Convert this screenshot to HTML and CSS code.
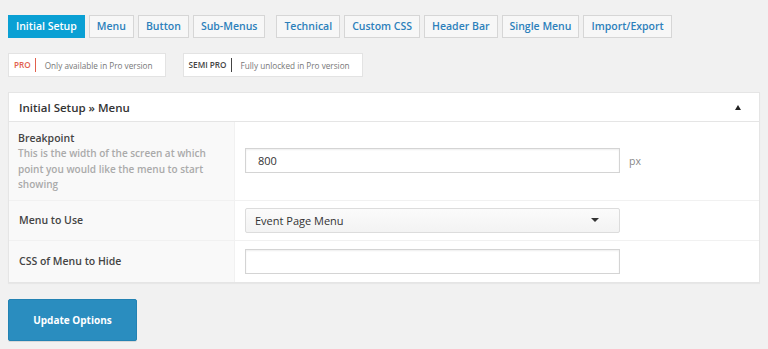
FILE: index.html
```html
<!DOCTYPE html>
<html lang="en">
<head>
  <meta charset="UTF-8">
  <title>Responsive Menu - Initial Setup</title>
  <link rel="stylesheet" href="styles.css">
</head>
<body>
  <div class="wrap">

    <div class="tabs">
      <a href="#" class="tab tab-active">Initial Setup</a>
      <a href="#" class="tab">Menu</a>
      <a href="#" class="tab">Button</a>
      <a href="#" class="tab">Sub-Menus</a>
      <a href="#" class="tab tab-spaced">Technical</a>
      <a href="#" class="tab">Custom CSS</a>
      <a href="#" class="tab">Header Bar</a>
      <a href="#" class="tab">Single Menu</a>
      <a href="#" class="tab">Import/Export</a>
    </div>

    <div class="legend">
      <div class="legend-item">
        <span class="legend-tag tag-pro">PRO</span>
        <span class="legend-text">Only available in Pro version</span>
      </div>
      <div class="legend-item">
        <span class="legend-tag tag-semi">SEMI PRO</span>
        <span class="legend-text">Fully unlocked in Pro version</span>
      </div>
    </div>

    <div class="panel">
      <div class="panel-head">
        <h3>Initial Setup &raquo; Menu</h3>
        <span class="toggle"></span>
      </div>

      <div class="row row-tall">
        <div class="label-cell">
          <div class="label">Breakpoint</div>
          <div class="desc">This is the width of the screen at which point you would like the menu to start showing</div>
        </div>
        <div class="value-cell">
          <input type="text" class="field" value="800">
          <span class="unit">px</span>
        </div>
      </div>

      <div class="row">
        <div class="label-cell">
          <div class="label">Menu to Use</div>
        </div>
        <div class="value-cell">
          <div class="select">
            <span>Event Page Menu</span>
            <span class="caret"></span>
          </div>
        </div>
      </div>

      <div class="row row-last">
        <div class="label-cell">
          <div class="label">CSS of Menu to Hide</div>
        </div>
        <div class="value-cell">
          <input type="text" class="field" value="">
        </div>
      </div>
    </div>

    <button class="update">Update Options</button>
  </div>
</body>
</html>
```

FILE: styles.css
```css
/* Reset */
body, h3, input, button {
    margin: 0;
    padding: 0;
    box-sizing: border-box;
}

body {
    font-family: 'Open Sans', 'Liberation Sans', sans-serif;
    background: #f1f1f1;
    color: #444;
}

.wrap {
    padding: 15px 8px;
}

/* Tabs */
.tabs {
    display: flex;
    gap: 4px;
}

.tab {
    display: block;
    height: 23px;
    padding: 0 7px;
    line-height: 21px;
    font-size: 10.5px;
    font-weight: 600;
    color: #2c80bb;
    text-decoration: none;
    background: #f7f7f7;
    border: 1px solid #d6d6d6;
    box-sizing: border-box;
}

.tab-active {
    background: #0aa0d4;
    border-color: #0aa0d4;
    color: #fff;
}

.tab-spaced {
    margin-left: 7px;
}

/* Pro legend */
.legend {
    display: flex;
    gap: 17px;
    margin-top: 15px;
}

.legend-item {
    display: flex;
    align-items: center;
    height: 24px;
    padding: 0 12px 0 5px;
    background: #fff;
    border: 1px solid #e3e3e3;
    box-sizing: border-box;
    font-size: 8.2px;
}

.legend-tag {
    font-weight: 600;
    padding-right: 4px;
    margin-right: 9px;
    line-height: 14px;
}

.tag-pro {
    color: #e2604d;
    border-right: 1px solid #e2604d;
}

.tag-semi {
    color: #444;
    border-right: 1px solid #444;
}

.legend-text {
    color: #777;
}

/* Panel */
.panel {
    margin-top: 15px;
    background: #fff;
    border: 1px solid #e5e5e5;
    box-shadow: 0 1px 1px rgba(0, 0, 0, 0.04);
}

.panel-head {
    display: flex;
    align-items: center;
    justify-content: space-between;
    height: 28px;
    padding: 0 18px 0 10px;
    border-bottom: 1px solid #e5e5e5;
}

.panel-head h3 {
    font-size: 11.5px;
    font-weight: 600;
    color: #333;
}

.toggle {
    width: 0;
    height: 0;
    border-left: 3.5px solid transparent;
    border-right: 3.5px solid transparent;
    border-bottom: 5px solid #222;
}

.row {
    display: flex;
    min-height: 39px;
    border-top: 1px solid #f1f1f1;
}

.panel-head + .row {
    border-top: none;
}

.row-last {
    min-height: 41px;
}

.label-cell {
    width: 226px;
    flex-shrink: 0;
    display: flex;
    flex-direction: column;
    justify-content: center;
    padding: 8px 10px;
    background: #f9f9f9;
    border-right: 1px solid #f1f1f1;
    box-sizing: border-box;
}

.row-tall .label-cell {
    padding: 8px 10px 7px 9px;
}

.label {
    font-size: 10.5px;
    font-weight: 600;
    color: #444;
    line-height: 16px;
}

.desc {
    font-size: 10px;
    font-weight: 600;
    color: #aaa;
    line-height: 15.5px;
}

.value-cell {
    display: flex;
    align-items: center;
    padding: 0 10px;
}

.field {
    width: 375px;
    height: 25px;
    padding: 0 12px;
    border: 1px solid #d4d4d4;
    box-shadow: inset 0 1px 2px rgba(0, 0, 0, 0.07);
    font-family: 'Open Sans', 'Liberation Sans', sans-serif;
    font-size: 11px;
    color: #333;
    background: #fff;
}

.unit {
    margin-left: 9px;
    font-size: 10.5px;
    color: #888;
}

.select {
    display: flex;
    align-items: center;
    justify-content: space-between;
    width: 375px;
    height: 25px;
    padding: 0 20px 0 9px;
    border: 1px solid #dcdcdc;
    border-radius: 2px;
    background: linear-gradient(#fbfbfb, #f3f3f3);
    box-sizing: border-box;
    font-size: 11px;
    color: #333;
}

.caret {
    width: 0;
    height: 0;
    border-left: 4px solid transparent;
    border-right: 4px solid transparent;
    border-top: 4px solid #333;
}

/* Submit */
.update {
    display: block;
    margin-top: 16px;
    width: 129px;
    height: 42px;
    background: #2a8dbf;
    border: 1px solid #2282b3;
    border-radius: 2px;
    color: #fff;
    font-family: 'Open Sans', 'Liberation Sans', sans-serif;
    font-size: 10px;
    font-weight: 700;
    box-shadow: 0 1px 0 rgba(0, 0, 0, 0.1);
}
```
